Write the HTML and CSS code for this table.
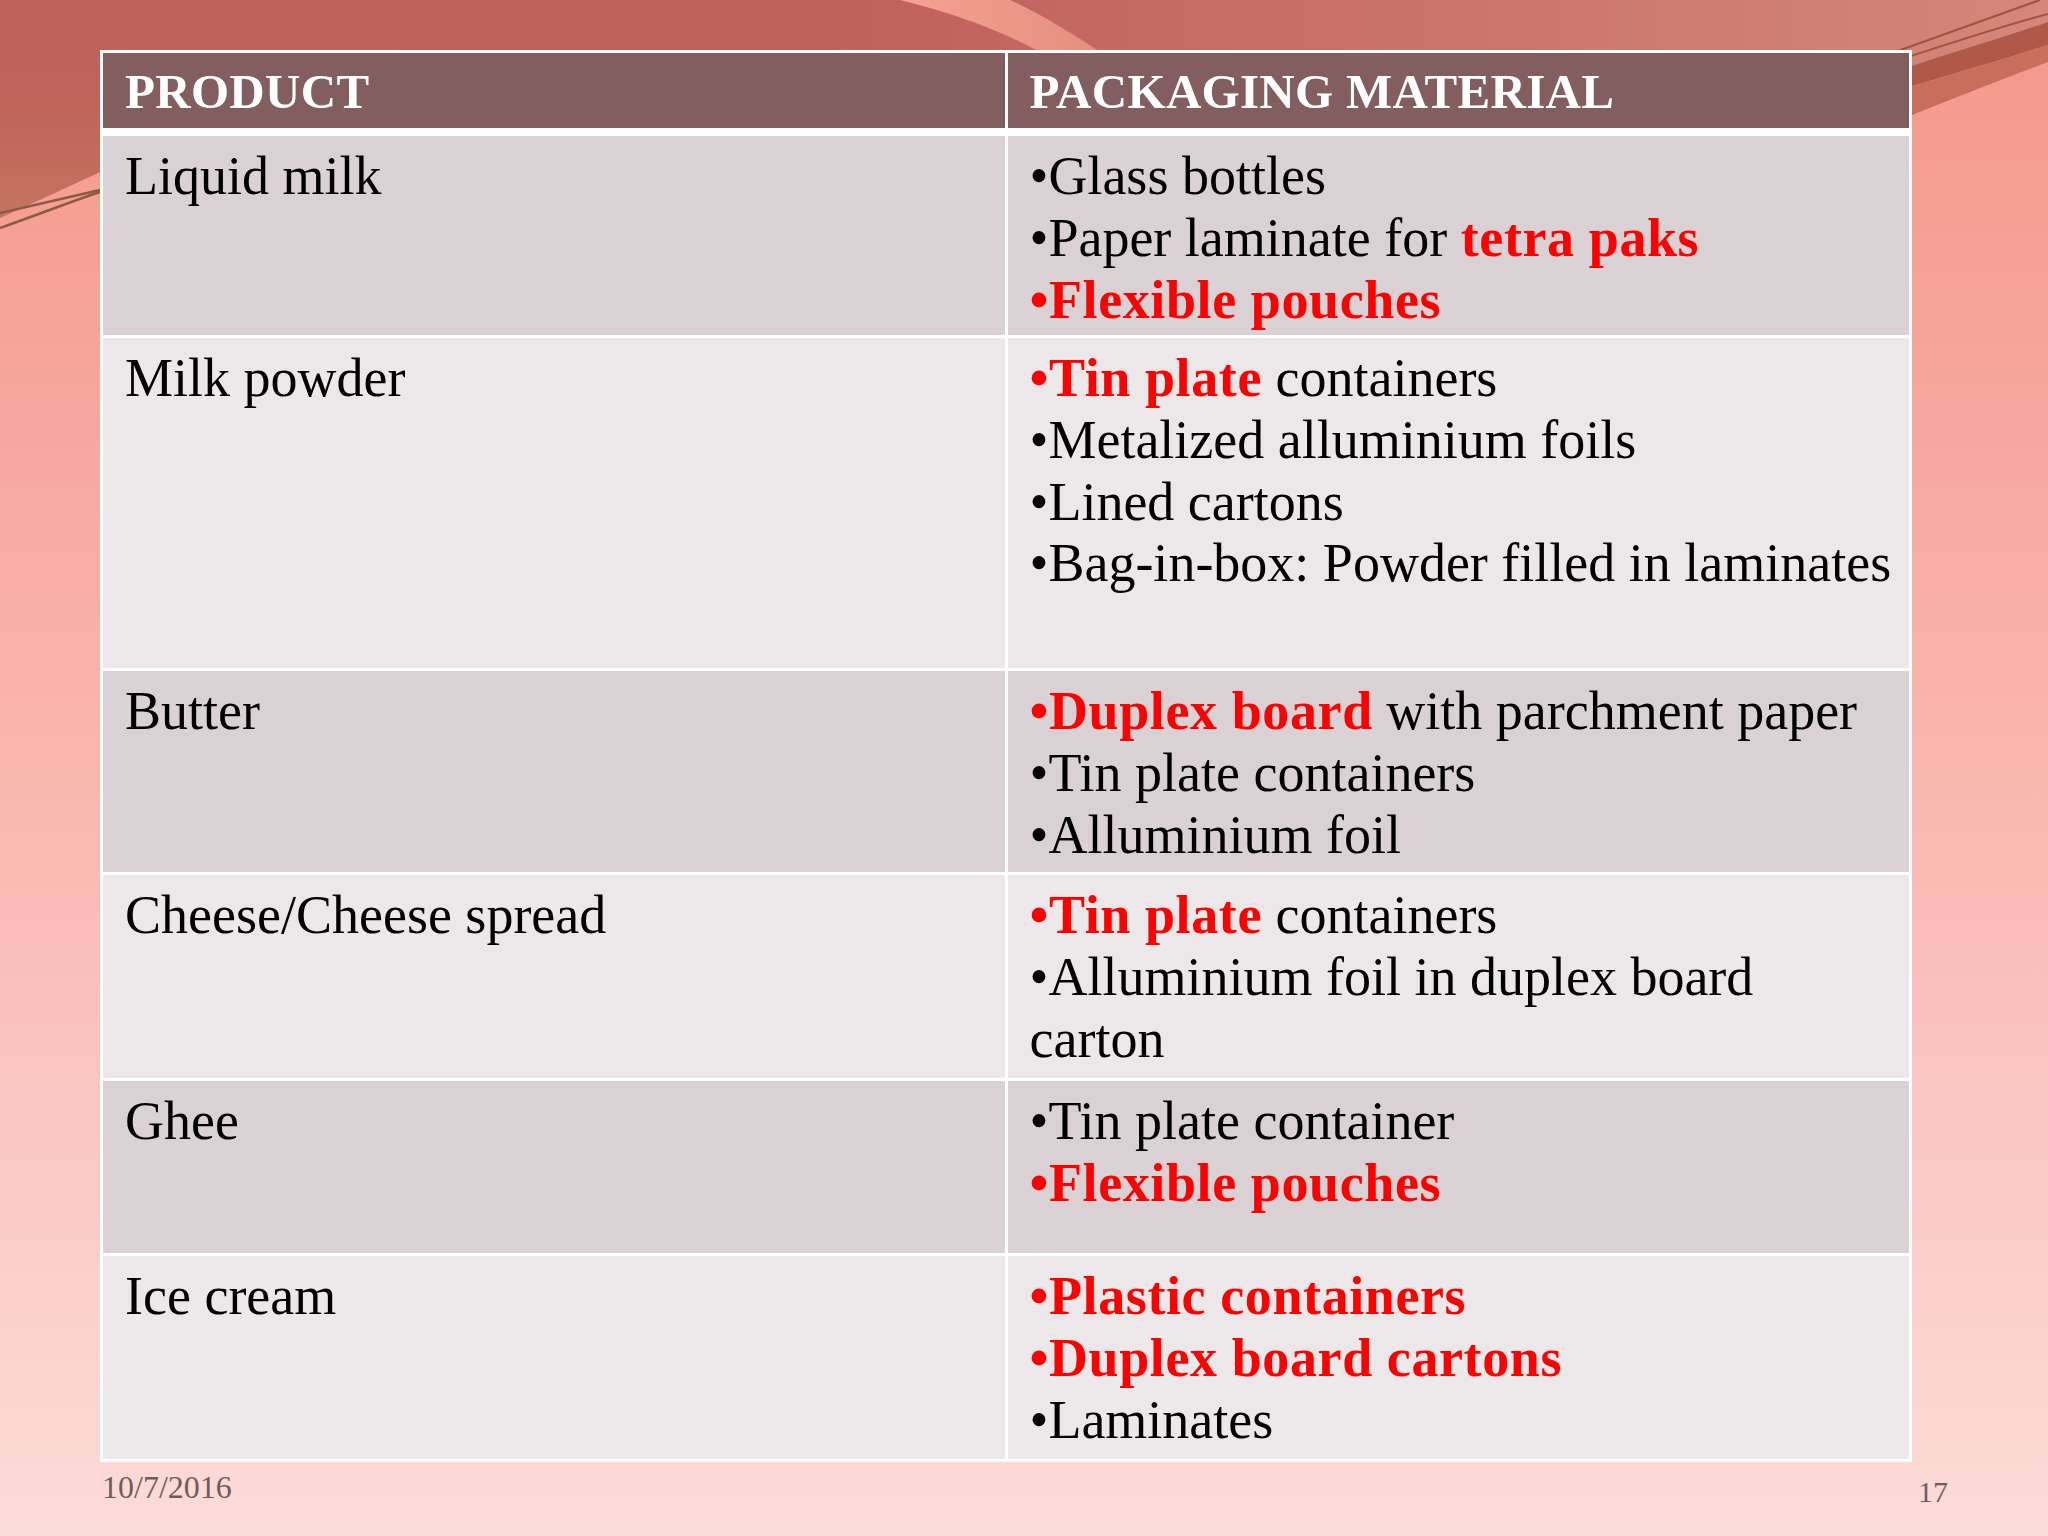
FILE: index.html
```html
<!DOCTYPE html>
<html>
<head>
<meta charset="utf-8">
<link rel="stylesheet" href="styles.css">
</head>
<body>
<div class="slide">
  <svg class="bg" viewBox="0 0 2048 1536" preserveAspectRatio="none" aria-hidden="true">
    <defs>
      <linearGradient id="base" x1="0" y1="0" x2="0" y2="1">
        <stop offset="0" stop-color="#f4978a"/>
        <stop offset="0.3" stop-color="#f7a99f"/>
        <stop offset="0.55" stop-color="#fab9b3"/>
        <stop offset="1" stop-color="#fcdcd9"/>
      </linearGradient>
      <linearGradient id="dark" x1="0" y1="0" x2="1" y2="0">
        <stop offset="0" stop-color="#c0605a"/>
        <stop offset="0.4" stop-color="#c0605a"/>
        <stop offset="1" stop-color="#d4877a"/>
      </linearGradient>
      <linearGradient id="darkv" x1="0" y1="0" x2="0" y2="1">
        <stop offset="0" stop-color="#c0605a" stop-opacity="0"/>
        <stop offset="1" stop-color="#c67c63"/>
      </linearGradient>
      <linearGradient id="wedge" x1="0" y1="0" x2="1" y2="0">
        <stop offset="0" stop-color="#f5a193"/>
        <stop offset="1" stop-color="#e4907f"/>
      </linearGradient>
    </defs>
    <rect x="0" y="0" width="2048" height="1536" fill="url(#base)"/>
    <path d="M0 0 H2048 V30 C1990 45 1940 60 1912 70 L1000 120 L100 172 L0 218 Z" fill="url(#dark)"/>
    <path d="M0 0 H400 V240 L100 172 L0 218 Z" fill="url(#darkv)" opacity="0.9"/>
    <path d="M900 0 C950 12 1000 30 1040 52 L1100 52 C1070 32 1040 14 1010 0 Z" fill="url(#wedge)"/>
    <path d="M1912 66 C1960 50 2010 35 2048 22 V45 C2010 57 1960 72 1912 86 Z" fill="#b15949"/>
    <path d="M1912 86 C1960 72 2010 57 2048 45 V62 C2000 80 1950 100 1912 115 Z" fill="#c96d5d"/>
    <path d="M1895 52 C1950 32 2000 14 2040 0" fill="none" stroke="#a4503f" stroke-width="2"/>
    <path d="M1905 58 C1960 40 2010 24 2048 14" fill="none" stroke="#a4503f" stroke-width="2"/>
    <path d="M0 213 C40 204 75 196 100 190" fill="none" stroke="#8c5a44" stroke-width="2.5"/>
    <path d="M0 228 C40 214 75 200 100 192" fill="none" stroke="#8c5a44" stroke-width="2.5"/>
  </svg>

  <div class="content">
    <div class="table">
      <div class="cell head">PRODUCT</div>
      <div class="cell head">PACKAGING MATERIAL</div>

      <div class="cell odd"><div class="line">Liquid milk</div></div>
      <div class="cell odd">
        <div class="line">•Glass bottles</div>
        <div class="line">•Paper laminate for <b class="hl">tetra paks</b></div>
        <div class="line"><b class="hl">•Flexible pouches</b></div>
      </div>

      <div class="cell even"><div class="line">Milk powder</div></div>
      <div class="cell even">
        <div class="line"><b class="hl">•Tin plate</b> containers</div>
        <div class="line">•Metalized alluminium foils</div>
        <div class="line">•Lined cartons</div>
        <div class="line">•Bag-in-box: Powder filled in laminates</div>
      </div>

      <div class="cell odd"><div class="line">Butter</div></div>
      <div class="cell odd">
        <div class="line"><b class="hl">•Duplex board</b> with parchment paper</div>
        <div class="line">•Tin plate containers</div>
        <div class="line">•Alluminium foil</div>
      </div>

      <div class="cell even"><div class="line">Cheese/Cheese spread</div></div>
      <div class="cell even">
        <div class="line"><b class="hl">•Tin plate</b> containers</div>
        <div class="line">•Alluminium foil in duplex board</div>
        <div class="line">carton</div>
      </div>

      <div class="cell odd"><div class="line">Ghee</div></div>
      <div class="cell odd">
        <div class="line">•Tin plate container</div>
        <div class="line"><b class="hl">•Flexible pouches</b></div>
      </div>

      <div class="cell even"><div class="line">Ice cream</div></div>
      <div class="cell even">
        <div class="line"><b class="hl">•Plastic containers</b></div>
        <div class="line"><b class="hl">•Duplex board cartons</b></div>
        <div class="line">•Laminates</div>
      </div>
    </div>

    <div class="footer">
      <span class="date">10/7/2016</span>
      <span class="page">17</span>
    </div>
  </div>
</div>
</body>
</html>
```

FILE: styles.css
```css
html, body {
  margin: 0;
  padding: 0;
}

body {
  width: 2048px;
  height: 1536px;
  overflow: hidden;
  font-family: "Liberation Serif", "Times New Roman", serif;
}

.slide {
  position: relative;
  width: 2048px;
  height: 1536px;
  overflow: hidden;
}

.bg {
  position: absolute;
  left: 0;
  top: 0;
  width: 2048px;
  height: 1536px;
  z-index: 0;
}

.content {
  position: relative;
  z-index: 1;
  padding: 50px 0 0 100px;
}

.table {
  width: 1812px;
  box-sizing: border-box;
  display: grid;
  grid-template-columns: minmax(0, 1fr) minmax(0, 1fr);
  grid-template-rows: 80px 199px 330px 201px 203px 172px 203px;
  gap: 3px;
  padding: 3px;
  background: #ffffff;
}

.cell {
  box-sizing: border-box;
  min-width: 0;
  padding: 10px 22px 0 22px;
  font-size: 54px;
  line-height: 61.8px;
  color: #000;
}

.line {
  white-space: nowrap;
}

.head {
  background: #835e5f;
  border-bottom: 5px solid #ffffff;
  color: #ffffff;
  font-weight: bold;
  font-size: 49px;
  line-height: 78px;
  padding-top: 0;
  letter-spacing: 0.3px;
}

.odd {
  background: #d9d1d3;
}

.even {
  background: #ece8e9;
}

.hl {
  color: #ff0000;
  font-weight: bold;
  letter-spacing: 0.6px;
}

.footer {
  width: 1846px;
  margin-left: 2px;
  margin-top: 7px;
  display: flex;
  justify-content: space-between;
  font-size: 32px;
  line-height: 36px;
  color: #6e5e5a;
}

.page {
  padding-top: 5px;
  font-size: 30px;
}
```
